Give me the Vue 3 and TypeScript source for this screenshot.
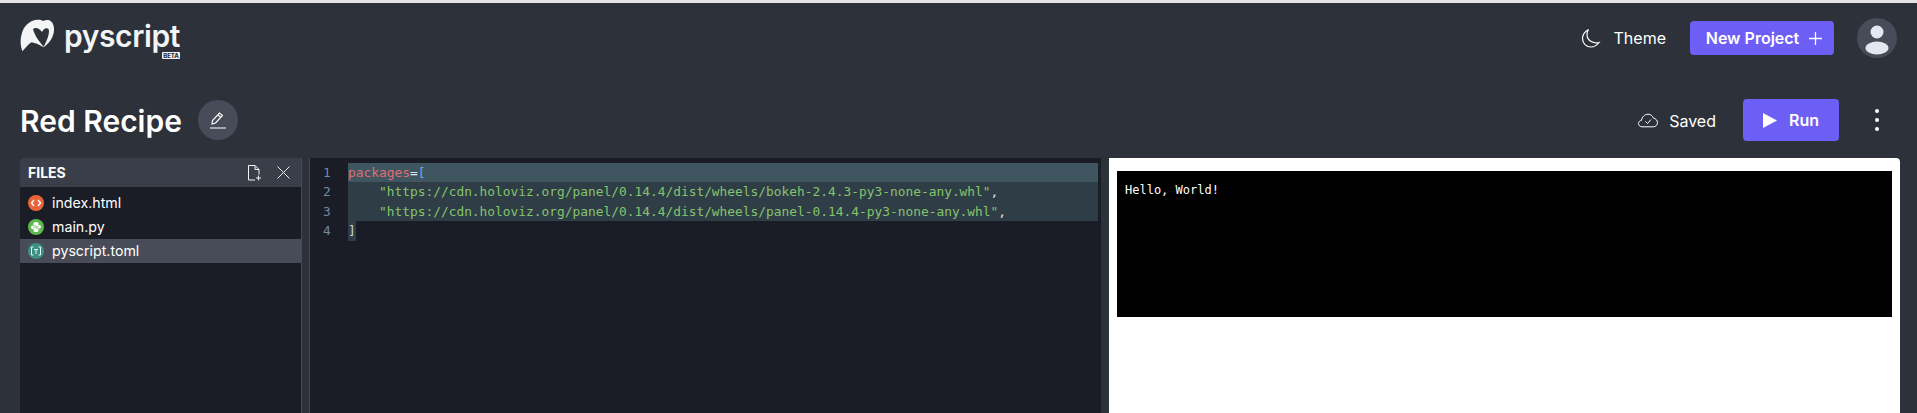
<script setup lang="ts">
interface FileItem { name: string; kind: string; active?: boolean }
const files: FileItem[] = [
  { name: 'index.html', kind: 'html' },
  { name: 'main.py', kind: 'py' },
  { name: 'pyscript.toml', kind: 'toml', active: true },
]
const wheels = [
  '    "https://cdn.holoviz.org/panel/0.14.4/dist/wheels/bokeh-2.4.3-py3-none-any.whl"',
  '    "https://cdn.holoviz.org/panel/0.14.4/dist/wheels/panel-0.14.4-py3-none-any.whl"',
]
</script>

<template>
  <div class="page">
    <header class="top">
      <div class="brand">
        <svg class="mark" width="35" height="34" viewBox="15 15 105 102">
          <path fill="#f3f4f6" d="M22 112C16 95 15 78 20 60 25 38 42 19 66 17c8-.5 14 1 19 4 5-3 12-4 18-2 10 4 15 17 14 30-1 20-13 38-31 51L66 89 50 85C40 90 33 100 22 112Z"/>
          <path fill="#2d3139" d="M54 45c4-4 12-4 18 0 4 3 7 6 9 9 3-5 7-10 12-11 6-1 9 3 9 9 0 13-7 30-16 46C74 84 60 68 54 45Z"/>
        </svg>
        <span class="word">pyscript<span class="beta">BETA</span></span>
      </div>
      <div class="top-actions">
        <button class="ghost theme">
          <svg width="20" height="21" viewBox="0 0 20 20" fill="none" stroke="#fff" stroke-width="1.200"><path d="M7.500 1C4 3 1.500 6 1.500 10c0 5 4 8.500 8.500 8.500 3.500 0 6-1.800 8-4.500-6 1.500-12-2-12-8 0-2 .5-3.500 1.500-5Z"/></svg>
          <span>Theme</span>
        </button>
        <button class="primary new">New Project
          <svg width="13" height="13" viewBox="0 0 13 13" stroke="#fff" stroke-width="1.300"><path d="M6.500 0v13M0 6.500h13"/></svg>
        </button>
        <span class="avatar">
          <svg width="26" height="30" viewBox="0 0 26 30" fill="#e2e8f0"><circle cx="13" cy="7" r="6.500"/><ellipse cx="13" cy="23" rx="11.500" ry="6.500"/></svg>
        </span>
      </div>
    </header>

    <section class="bar">
      <div class="title">
        <h1>Red Recipe</h1>
        <span class="edit">
          <svg width="18" height="18" viewBox="0 0 18 18" fill="none" stroke="#fff" stroke-width="1.100"><path d="M1 17h16M3 13l.5-3.500L10.500 2l3 2.500L6.500 12 3 13ZM9 4l3 2.500"/></svg>
        </span>
      </div>
      <div class="bar-actions">
        <span class="saved">
          <svg width="20" height="15" viewBox="0 0 20 14" fill="none" stroke="#fff" stroke-width="1"><path d="M5 13.300H4C2 13.300.5 11.800.5 10 .5 8.200 2 7 3.500 6.800 4 3.300 6.800.7 10 .7c2.500 0 4.500 1.600 5.300 3.800 2.300.4 4.200 2.300 4.200 4.700 0 2.300-1.900 4.100-4.200 4.100H5Z"/><path d="M7.500 8l2 2 3.500-4"/></svg>
          Saved
        </span>
        <button class="primary run">
          <svg width="14" height="15" viewBox="0 0 14 15" fill="#fff"><path d="M0 0l14 7.500L0 15Z"/></svg>
          Run
        </button>
        <span class="kebab"><i></i><i></i><i></i></span>
      </div>
    </section>

    <main class="work">
      <aside class="files">
        <div class="files-head">
          <strong>FILES</strong>
          <span class="head-icons">
            <svg width="14" height="16" viewBox="0 0 14 16" fill="none" stroke="#f3f4f6" stroke-width="1"><path d="M8 15H1.500V.5H8L12 4.500v5M8 .5v4h4M9 13h5M11.500 10.500v5"/></svg>
            <svg width="13" height="13" viewBox="0 0 13 13" stroke="#e5e7eb" stroke-width="1"><path d="M.5.500l12 12M12.500.500l-12 12"/></svg>
          </span>
        </div>
        <ul>
          <li v-for="f in files" :key="f.name" :class="{ active: f.active }">
            <span class="file-icon" :class="f.kind">
              <svg v-if="f.kind === 'html'" width="16" height="16" viewBox="0 0 16 16" fill="none" stroke="#fff" stroke-width="1.400"><path d="M6 5L3.500 8 6 11M10 5l2.500 3L10 11"/></svg>
              <svg v-else-if="f.kind === 'py'" width="16" height="16" viewBox="0 0 16 16" fill="#fff"><path d="M8 3C6 3 5.500 3.800 5.500 4.800V6H8v.6H4.500C3.400 6.600 3 7.500 3 8.200s.4 1.900 1.500 1.900h1V9C5.500 8 6.200 7.400 7 7.400h2.500c.7 0 1-.5 1-1V4.800C10.500 3.700 9.800 3 8 3Z"/><path d="M8 13c2 0 2.500-.8 2.500-1.800V10H8v-.6h3.500c1.100 0 1.500-.9 1.500-1.600s-.4-1.900-1.500-1.900h-1V7c0 1-.7 1.600-1.500 1.600H6.500c-.7 0-1 .5-1 1v1.600C5.500 12.300 6.200 13 8 13Z"/></svg>
              <svg v-else width="16" height="16" viewBox="0 0 16 16" fill="none" stroke="#dff" stroke-width="1"><path d="M5.500 4h-2v8h2M10.500 4h2v8h-2M6 6.500h4M8 6.500V11"/></svg>
            </span>
            {{ f.name }}
          </li>
        </ul>
      </aside>
      <div class="split"></div>
      <div class="editor">
        <div class="gutter"><span>1</span><span>2</span><span>3</span><span>4</span></div>
        <div class="code">
          <div class="line current"><span class="key">packages</span><span class="op">=</span><span class="brk">[</span></div>
          <div v-for="w in wheels" :key="w" class="line sel"><span class="str">{{ w }}</span><span class="op">,</span></div>
          <div class="line"><span class="sel-end">]</span></div>
        </div>
      </div>
      <div class="split right"></div>
      <div class="preview">
        <pre class="term">Hello, World!</pre>
      </div>
    </main>
  </div>
</template>

<style scoped>
.page {
  width: 1917px;
  height: 413px;
  box-sizing: border-box;
  border-top: 3px solid #e4e4e4;
  background: #2d3139;
  color: #fff;
  font-family: Inter, "Liberation Sans", sans-serif;
  display: flex;
  flex-direction: column;
  overflow: hidden;
}
button { font: inherit; color: #fff; border: 0; background: none; padding: 0; }
.top {
  height: 70px;
  flex: none;
  display: flex;
  justify-content: space-between;
  align-items: center;
  padding: 0 20px;
}
.brand { display: flex; align-items: center; gap: 9px; margin-top: -4px; }
.mark { display: block; }
.word {
  position: relative;
  font-size: 30px;
  font-weight: 600;
  letter-spacing: -0.4px;
  color: #f3f4f6;
  line-height: 36px;
}
.beta {
  position: absolute;
  right: 0;
  bottom: -5px;
  background: #f3f4f6;
  color: #2d3139;
  font-size: 6px;
  font-weight: 800;
  line-height: 7px;
  padding: 0 1px;
  letter-spacing: 0;
  border-radius: 1px;
}
.top-actions { display: flex; align-items: center; }
.theme { display: flex; align-items: center; gap: 13px; font-size: 16px; margin-right: 24px; }
.primary { background: #6d5ef6; font-weight: 600; font-size: 16px; border-radius: 4px; display: flex; align-items: center; }
.new { height: 34px; width: 144px; justify-content: center; gap: 10px; margin-right: 23px; padding-left: 4px; box-sizing: border-box; }
.avatar { width: 40px; height: 40px; border-radius: 50%; background: #484c59; display: flex; justify-content: center; align-items: flex-end; overflow: hidden; padding-bottom: 3px; box-sizing: border-box; }
.bar {
  height: 85px;
  flex: none;
  display: flex;
  justify-content: space-between;
  align-items: center;
  padding: 9px 17px 0 20px;
  box-sizing: border-box;
}
.title { display: flex; align-items: center; gap: 16px; }
h1 { margin: 0; padding-top: 2px; font-size: 30px; font-weight: 600; line-height: 40px; letter-spacing: 0; }
.edit { width: 40px; height: 40px; border-radius: 50%; background: #484c59; display: flex; align-items: center; justify-content: center; }
.bar-actions { display: flex; align-items: center; }
.saved { display: flex; align-items: center; gap: 11px; font-size: 16px; margin-right: 27px; padding-top: 1px; }
.run { width: 96px; height: 42px; justify-content: center; gap: 12px; margin-right: 36px; }
.kebab { display: flex; flex-direction: column; gap: 5px; width: 4px; margin-right: 21px; }
.kebab i { width: 4px; height: 4px; border-radius: 50%; background: #fff; display: block; }
.work {
  flex: 1;
  display: flex;
  margin: 0 17px 0 20px;
  min-height: 0;
}
.files { width: 281px; flex: none; background: #1a1d25; border-top-left-radius: 4px; overflow: hidden; }
.files-head {
  height: 29px;
  background: #3a3e48;
  display: flex;
  justify-content: space-between;
  align-items: center;
  padding: 0 11px 0 8px;
}
.files-head strong { font-size: 14px; font-weight: 700; }
.head-icons { display: flex; align-items: center; gap: 16px; }
ul { list-style: none; margin: 0; padding: 4px 0 0; }
li { height: 24px; display: flex; align-items: center; gap: 8px; padding-left: 8px; font-size: 14.200px; color: #fff; line-height: 22px; }
li.active { background: #484c59; }
.file-icon { width: 16px; height: 16px; border-radius: 50%; display: block; flex: none; }
.file-icon svg { display: block; }
.html { background: #e9643a; }
.py { background: #5cb74f; }
.toml { background: #3d8f80; }
.split { width: 9px; flex: none; background: #2d3139; border-left: 1px solid #464a55; border-right: 1px solid #464a55; box-sizing: border-box; }
.split.right { border: 0; border-left: 1px solid #1a1d25; }
.editor { width: 790px; flex: none; display: flex; background: #1a1d25; padding-top: 5px; box-sizing: border-box; font-family: "DejaVu Sans Mono", monospace; font-size: 12.860px; }
.gutter { width: 38px; flex: none; display: flex; flex-direction: column; color: #6f8aa6; }
.gutter span { height: 19.400px; line-height: 19.400px; padding-left: 13px; }
.code { flex: 1; min-width: 0; }
.line { height: 19.400px; line-height: 19.400px; white-space: pre; color: #cbd5e1; }
.current { background: #3f5661; margin-right: 2px; }
.sel { background: #2f3d47; margin-right: 2px; }
.sel-end { background: #2f3d47; display: inline-block; height: 19.400px; }
.key { color: #e06c75; }
.op { color: #dbe3ea; }
.brk { color: #61afef; }
.str { color: #85c46c; }
.preview { flex: 1; background: #fff; border-top-right-radius: 4px; padding: 13px 8px 0 8px; min-width: 0; }
.term {
  margin: 0;
  height: 146px;
  background: #000;
  color: #fff;
  font-family: "DejaVu Sans Mono", monospace;
  font-size: 12px;
  padding: 12px 8px;
  box-sizing: border-box;
  line-height: 14px;
}
</style>
